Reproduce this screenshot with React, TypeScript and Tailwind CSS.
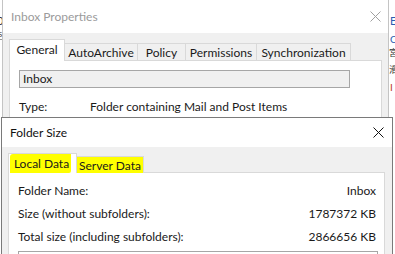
import React from "react";

function XIcon({ color, size = 11 }: { color: string; size?: number }) {
  return (
    <svg width={size} height={size} viewBox="0 0 11 11" fill="none">
      <path d="M0.5 0.5 L10.5 10.5 M10.5 0.5 L0.5 10.5" stroke={color} strokeWidth="1" />
    </svg>
  );
}

export default function App() {
  return (
    <div className="relative w-[395px] h-[254px] overflow-hidden bg-white text-[12px] leading-none text-[#1a1a1a] font-['Lato',sans-serif]">
      {/* background app fragments */}
      <span className="absolute left-[-3px] top-[15px] text-[11px] text-[#333]">0</span>
      <span className="absolute left-[-2px] top-[28px] text-[10px] text-[#555]">s</span>
      <div className="absolute left-0 top-[39px] w-[3px] h-px bg-[#999]" />
      <span className="absolute left-[390px] top-[15px] text-[11px] text-[#2a5db0]">E</span>
      <span className="absolute left-[390px] top-[34px] text-[10px] text-[#2a5db0]">C</span>
      <span className="absolute left-[389px] top-[48px] text-[9px] text-[#333] font-['Noto_Sans_CJK_SC',sans-serif]">宮</span>
      <span className="absolute left-[389px] top-[65px] text-[9px] text-[#333] font-['Noto_Sans_CJK_SC',sans-serif]">滑</span>
      <span className="absolute left-[390px] top-[82px] text-[10px] text-[#c0392b]">I</span>

      {/* Inbox Properties window */}
      <div className="absolute left-[2px] top-[-1px] w-[387px] h-[200px] border border-[#c4c4c4] bg-[#f0f0f0] flex flex-col">
        <div className="h-[33px] bg-white flex items-center justify-between pl-[8px] pr-[7px] shrink-0">
          <span className="text-[#9b9b9b] text-[12px]">Inbox Properties</span>
          <XIcon color="#a0a0a0" />
        </div>
        <div className="pl-[6px] pt-[6px] flex flex-col">
          <div className="flex items-end h-[22px] relative z-10">
            <div className="w-[56px] h-[22px] bg-white border border-b-0 border-[#d9d9d9] flex items-center justify-center pb-[2px]">General</div>
            <div className="w-[74px] h-[18px] -ml-px border border-b-0 border-[#d9d9d9] flex items-center justify-center">AutoArchive</div>
            <div className="w-[49px] h-[18px] -ml-px border border-b-0 border-[#d9d9d9] flex items-center justify-center">Policy</div>
            <div className="w-[72px] h-[18px] -ml-px border border-b-0 border-[#d9d9d9] flex items-center justify-center">Permissions</div>
            <div className="w-[95px] h-[18px] -ml-px border border-b-0 border-[#d9d9d9] flex items-center justify-center">Synchronization</div>
          </div>
          <div className="w-[373px] h-[140px] -mt-px bg-white border border-[#d9d9d9] pl-[9px] pt-[9px] flex flex-col">
            <div className="w-[331px] h-[18px] bg-[#f0f0f0] border border-[#a6a6a6] flex items-center pl-[3px]">Inbox</div>
            <div className="mt-[9px] h-[20px] flex items-center">
              <span className="w-[71px]">Type:</span>
              <span>Folder containing Mail and Post Items</span>
            </div>
          </div>
        </div>
      </div>

      {/* Folder Size window */}
      <div className="absolute left-[1px] top-[117px] w-[392px] h-[150px] border border-[#7a7a7a] bg-[#f0f0f0] flex flex-col">
        <div className="h-[29px] bg-white flex items-center justify-between pl-[8px] pr-[8px] shrink-0">
          <span className="text-[12px] text-[#111]">Folder Size</span>
          <XIcon color="#111" />
        </div>
        <div className="pl-[6px] pt-[6px] flex flex-col">
          <div className="flex items-end h-[20px] relative z-10">
            <div className="w-[69px] h-[20px] bg-white border border-b-0 border-[#d9d9d9] flex items-start">
              <div className="ml-px w-[61px] h-[19px] bg-[#ffff00] rounded-tl-[3px] rounded-br-[2px] flex items-center justify-center pl-[2px]">Local Data</div>
            </div>
            <div className="w-[68px] h-[17px] -ml-px border border-b-0 border-[#d9d9d9] bg-[#ffff00] flex items-center justify-center pt-[2px]">Server Data</div>
          </div>
          <div className="w-[377px] h-[100px] -mt-px bg-white border border-[#d9d9d9] pl-[9px] pr-[8px] pt-[7px] flex flex-col">
            <div className="h-[23px] flex items-center justify-between">
              <span>Folder Name:</span>
              <span>Inbox</span>
            </div>
            <div className="h-[23px] flex items-center justify-between">
              <span>Size (without subfolders):</span>
              <span>1787372 KB</span>
            </div>
            <div className="h-[23px] flex items-center justify-between">
              <span>Total size (including subfolders):</span>
              <span>2866656 KB</span>
            </div>
            <div className="mt-[3px] w-[360px] h-[20px] border border-[#a6a6a6]" />
          </div>
        </div>
      </div>
    </div>
  );
}
